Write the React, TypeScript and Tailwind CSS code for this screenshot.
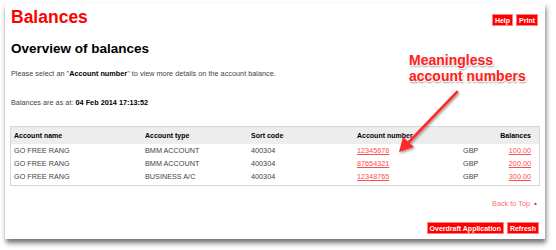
import * as React from 'react';

const rows = [
  { name: 'GO FREE RANG', type: 'BMM ACCOUNT', sort: '400304', num: '12345678', cur: 'GBP', bal: '100.00' },
  { name: 'GO FREE RANG', type: 'BMM ACCOUNT', sort: '400304', num: '87654321', cur: 'GBP', bal: '200.00' },
  { name: 'GO FREE RANG', type: 'BUSINESS A/C', sort: '400304', num: '12348765', cur: 'GBP', bal: '300.00' },
];

const cols = 'grid grid-cols-[131px_106px_106px_106px_1fr_auto] items-center pl-[3px] pr-[8px]';

const RedButton: React.FC<{ label: string }> = ({ label }) => (
  <span className="inline-flex items-center h-[10px] px-[2px] bg-[#ff0000] outline outline-1 outline-[#ff8080] text-white font-bold text-[7px] leading-none">
    {label}
  </span>
);

const App: React.FC = () => {
  return (
    <div className="relative w-[556px] h-[250px] bg-white overflow-hidden" style={{ fontFamily: '"Liberation Sans", Arial, sans-serif' }}>
      <div className="ml-[5px] mt-[3px] w-[540px] h-[236px] bg-white shadow-[1px_4px_5px_rgba(0,0,0,0.55)] flex flex-col px-[6px]">
        <div className="flex justify-between items-start mt-[4px]">
          <h1 className="text-[17.5px] font-bold text-[#ff0000] leading-[20px]">Balances</h1>
          <div className="flex gap-[5px] mt-[8px] mr-[2px]">
            <RedButton label="Help" />
            <RedButton label="Print" />
          </div>
        </div>
        <h2 className="mt-[14px] text-[13.5px] font-bold text-black leading-[16px]">Overview of balances</h2>
        <p className="mt-[12px] text-[7.3px] text-[#444] leading-[9px]">
          Please select an "<b className="text-black">Account number</b>" to view more details on the account balance.
        </p>
        <p className="mt-[20px] text-[7.3px] text-[#444] leading-[9px]">
          Balances are as at: <b className="text-black">04 Feb 2014 17:13:52</b>
        </p>
        <div className="mt-[19px] ml-[-1px] mr-[-1px] border border-[#d6d6d6] text-[7.25px] leading-[12px] pb-[2px]">
          <div className={`${cols} h-[17px] bg-[#ededed] font-bold text-black text-[7px]`}>
            <span>Account name</span>
            <span>Account type</span>
            <span>Sort code</span>
            <span>Account number</span>
            <span></span>
            <span className="text-right">Balances</span>
          </div>
          {rows.map((r, i) => (
            <div key={i} className={`${cols} h-[13px] text-[#444]`}>
              <span>{r.name}</span>
              <span>{r.type}</span>
              <span>{r.sort}</span>
              <span className="text-[#ff4d4d] underline">{r.num}</span>
              <span>{r.cur}</span>
              <span className="text-right text-[#ff4d4d] underline">{r.bal}</span>
            </div>
          ))}
        </div>
        <div className="mt-[13px] flex justify-end items-center gap-[3px] text-[7.3px] text-[#ff7070] leading-[9px] mr-[1px]">
          <span>Back to Top</span>
          <span className="text-[5px] text-[#ff3030]">▲</span>
        </div>
        <div className="mt-[15px] flex justify-end gap-[5px] mr-[1px]">
          <RedButton label="Overdraft Application" />
          <RedButton label="Refresh" />
        </div>
      </div>

      <div
        className="absolute left-[409px] top-[52px] text-[14px] font-bold text-[#ff2020] leading-[16px]"
        style={{ textShadow: '0 0 2px #fff, 1px 1px 0 #fff, 1px 2px 2px rgba(0,0,0,0.45)' }}
      >
        <div>Meaningless</div>
        <div>account numbers</div>
      </div>
      <svg className="absolute left-0 top-0" width="556" height="250" viewBox="0 0 556 250">
        <defs>
          <filter id="sh" x="-20%" y="-20%" width="140%" height="140%">
            <feDropShadow dx="1" dy="1.5" stdDeviation="1" floodColor="#000" floodOpacity="0.4" />
          </filter>
        </defs>
        <g filter="url(#sh)">
          <line x1="457" y1="92" x2="408" y2="143" stroke="#ff2a2a" strokeWidth="2.6" strokeLinecap="round" />
          <polygon points="399,152 403,137 414,147" fill="#ff2a2a" />
        </g>
      </svg>
    </div>
  );
};

export default App;
